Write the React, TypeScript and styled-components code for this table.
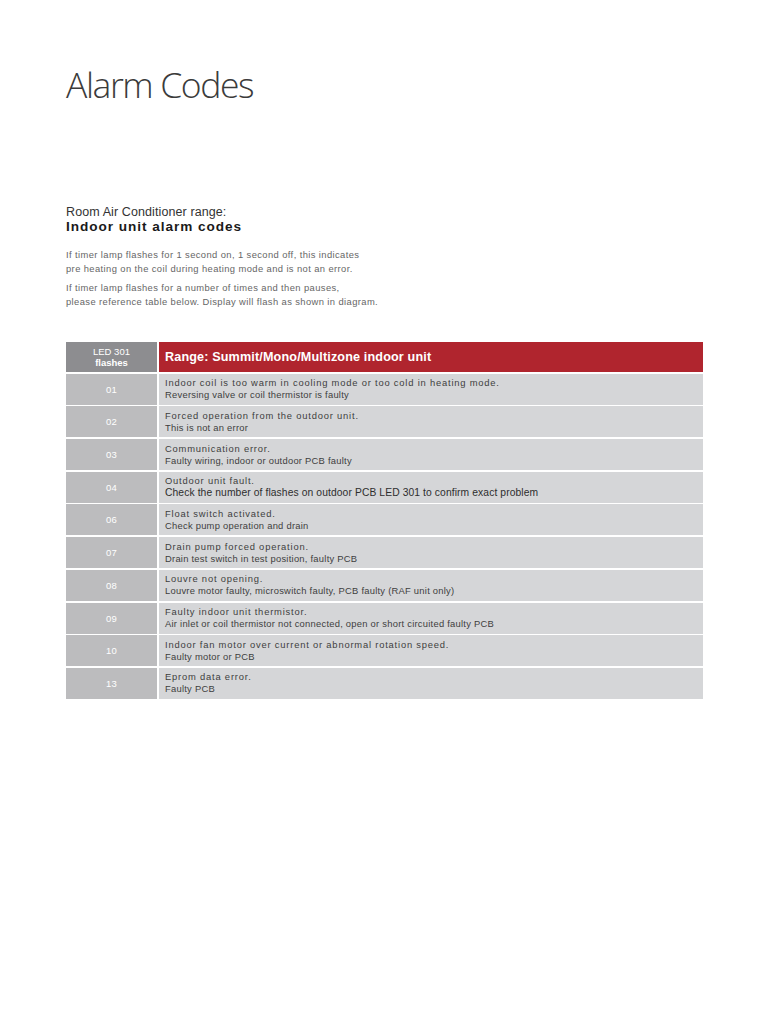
import React from "react";
import styled, { createGlobalStyle } from "styled-components";

const GlobalStyle = createGlobalStyle`
  html, body { margin: 0; padding: 0; background: #ffffff; }
  body { font-family: "Liberation Sans", Arial, sans-serif; }
`;

const Page = styled.div`
  width: 768px;
  min-height: 1024px;
  box-sizing: border-box;
  padding: 62px 65px 0 66px;
  background: #ffffff;
`;

const Title = styled.h1`
  margin: 0;
  font-family: "Open Sans", sans-serif;
  font-weight: 300;
  font-size: 35.5px;
  line-height: 44px;
  color: #3b3b3b;
  letter-spacing: -1.4px;
`;

const Intro = styled.section`
  margin-top: 99px;
  display: flex;
  flex-direction: column;
`;

const Kicker = styled.div`
  font-size: 12.5px;
  line-height: 14px;
  color: #333;
  letter-spacing: 0.1px;
`;

const Heading = styled.h2`
  margin: 0;
  font-size: 13.6px;
  line-height: 16px;
  font-weight: 700;
  color: #1a1a1a;
  letter-spacing: 0.95px;
`;

const Para = styled.p<{ $first?: boolean }>`
  margin: ${(p) => (p.$first ? "13px" : "5px")} 0 0 0;
  font-size: 9.4px;
  line-height: 14px;
  color: #666;
  letter-spacing: 0.4px;
`;

const Table = styled.div`
  margin-top: 33px;
  width: 637px;
  display: grid;
  grid-template-columns: 91px 1fr;
  column-gap: 2px;
  row-gap: 1.7px;
`;

const HeadLeft = styled.div`
  background: #8d8d90;
  height: 30px;
  display: flex;
  flex-direction: column;
  align-items: center;
  justify-content: center;
  color: #fff;
  font-size: 9.5px;
  line-height: 11px;
`;

const HeadRight = styled.div`
  background: #b0252e;
  height: 30px;
  display: flex;
  align-items: center;
  padding-left: 6px;
  color: #fff;
  font-weight: 700;
  font-size: 12.6px;
  letter-spacing: 0.15px;
`;

const CodeCell = styled.div`
  background: #bcbcbe;
  height: 31px;
  display: flex;
  align-items: center;
  justify-content: center;
  color: #fff;
  font-size: 9.5px;
  letter-spacing: 0.3px;
`;

const DescCell = styled.div`
  background: #d5d6d8;
  height: 31px;
  display: flex;
  flex-direction: column;
  justify-content: center;
  padding-left: 6px;
  color: #3e3e3e;
  font-size: 9.4px;
  line-height: 12px;
`;

const Line = styled.div<{ $strong?: boolean; $lead?: boolean }>`
  white-space: nowrap;
  font-size: ${(p) => (p.$strong ? "10.3px" : "9.4px")};
  letter-spacing: ${(p) => (p.$strong ? "0.1px" : p.$lead ? "0.8px" : "0.25px")};
  color: ${(p) => (p.$strong ? "#2e2e2e" : "#3e3e3e")};
`;

const rows: { code: string; l1: string; l2: string; strong?: boolean }[] = [
  { code: "01", l1: "Indoor coil is too warm in cooling mode or too cold in heating mode.", l2: "Reversing valve or coil thermistor is faulty" },
  { code: "02", l1: "Forced operation from the outdoor unit.", l2: "This is not an error" },
  { code: "03", l1: "Communication error.", l2: "Faulty wiring, indoor or outdoor PCB faulty" },
  { code: "04", l1: "Outdoor unit fault.", l2: "Check the number of flashes on outdoor PCB LED 301 to confirm exact problem", strong: true },
  { code: "06", l1: "Float switch activated.", l2: "Check pump operation and drain" },
  { code: "07", l1: "Drain pump forced operation.", l2: "Drain test switch in test position, faulty PCB" },
  { code: "08", l1: "Louvre not opening.", l2: "Louvre motor faulty, microswitch faulty, PCB faulty (RAF unit only)" },
  { code: "09", l1: "Faulty indoor unit thermistor.", l2: "Air inlet or coil thermistor not connected, open or short circuited faulty PCB" },
  { code: "10", l1: "Indoor fan motor over current or abnormal rotation speed.", l2: "Faulty motor or PCB" },
  { code: "13", l1: "Eprom data error.", l2: "Faulty PCB" },
];

export default function App() {
  return (
    <>
      <GlobalStyle />
      <Page>
        <Title>Alarm Codes</Title>
        <Intro>
          <Kicker>Room Air Conditioner range:</Kicker>
          <Heading>Indoor unit alarm codes</Heading>
          <Para $first>
            If timer lamp flashes for 1 second on, 1 second off, this indicates
            <br />
            pre heating on the coil during heating mode and is not an error.
          </Para>
          <Para>
            If timer lamp flashes for a number of times and then pauses,
            <br />
            please reference table below. Display will flash as shown in diagram.
          </Para>
        </Intro>
        <Table>
          <HeadLeft>
            <span>LED 301</span>
            <b>flashes</b>
          </HeadLeft>
          <HeadRight>Range: Summit/Mono/Multizone indoor unit</HeadRight>
          {rows.map((r) => (
            <React.Fragment key={r.code}>
              <CodeCell>{r.code}</CodeCell>
              <DescCell>
                <Line $lead>{r.l1}</Line>
                <Line $strong={r.strong}>{r.l2}</Line>
              </DescCell>
            </React.Fragment>
          ))}
        </Table>
      </Page>
    </>
  );
}
